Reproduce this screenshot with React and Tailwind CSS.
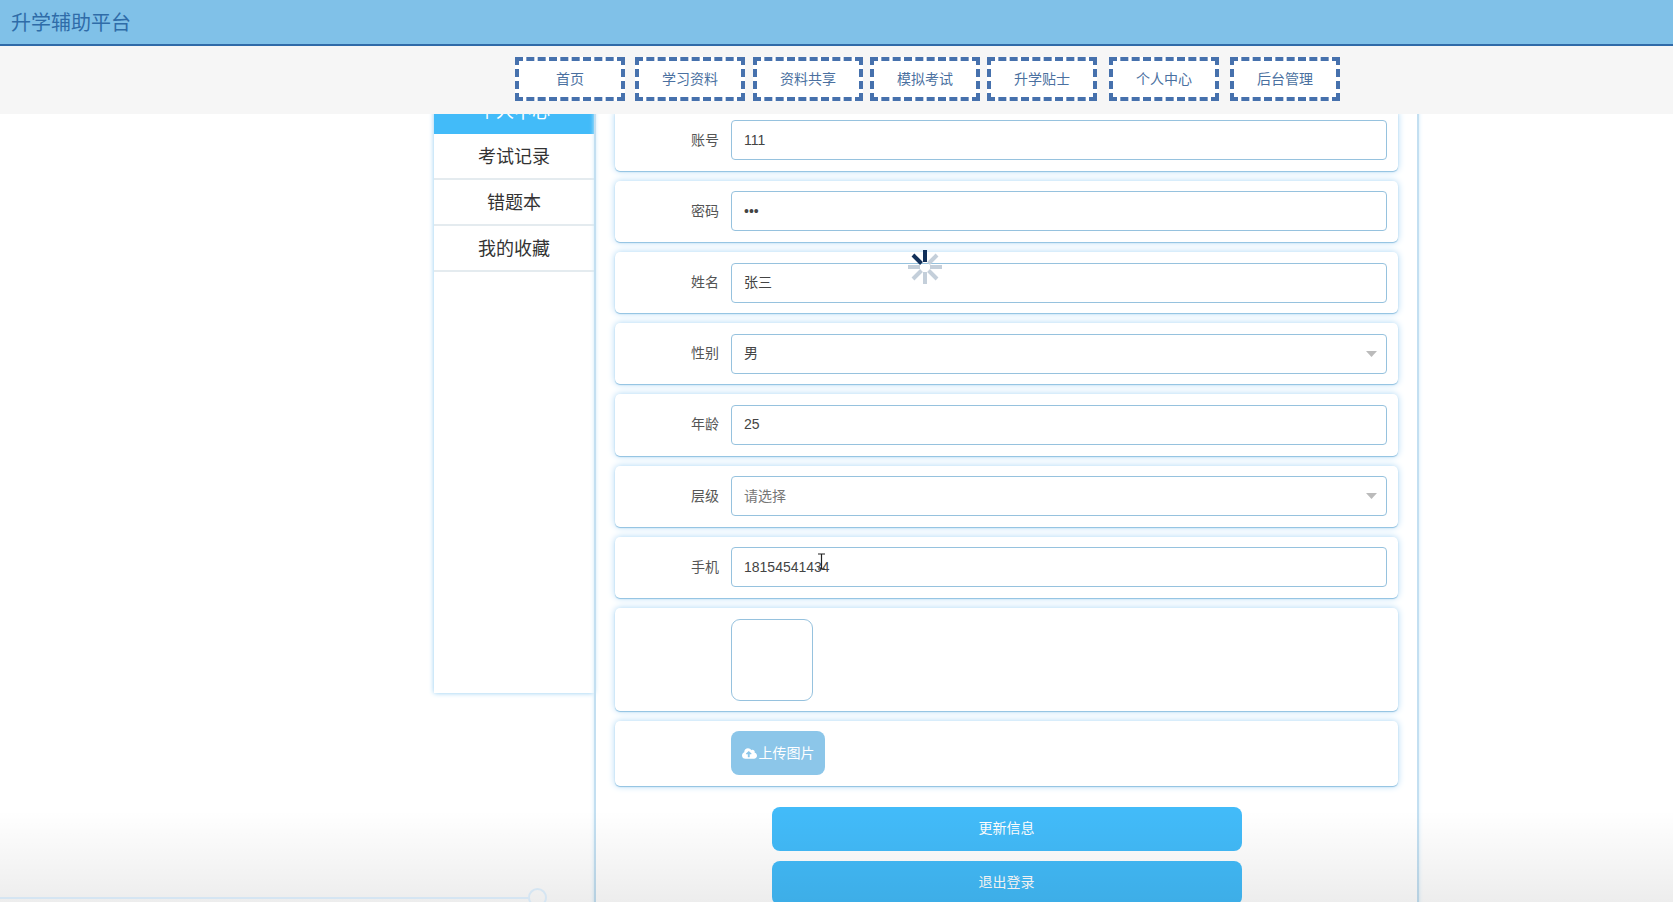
import React from "react";
import { FaCloudUploadAlt } from "react-icons/fa";

const font = { fontFamily: '"Liberation Sans", "Noto Sans CJK SC", sans-serif' };

const navItems = [
  ["首页", "ml-[515px]"],
  ["学习资料", "ml-[10px]"],
  ["资料共享", "ml-[8px]"],
  ["模拟考试", "ml-[7px]"],
  ["升学贴士", "ml-[7px]"],
  ["个人中心", "ml-[12px]"],
  ["后台管理", "ml-[11px]"],
];

const fields = [
  { label: "账号", value: "111" },
  { label: "密码", value: "•••", small: true },
  { label: "姓名", value: "张三" },
  { label: "性别", value: "男", select: true },
  { label: "年龄", value: "25" },
  { label: "层级", value: "请选择", select: true, muted: true },
  { label: "手机", value: "18154541434" },
];

const rowClass =
  "w-[783px] rounded-[5px] bg-white shadow-[0_1px_1px_#8fc0e0,0_0_7px_#a9d6f5] flex";

function Row({ f }) {
  return (
    <div className={rowClass + " h-[61.2px] items-center"}>
      <div className="w-[104px] text-right text-[14px] text-[#555]">{f.label}</div>
      <div className="ml-[12px] w-[656px] h-[40px] rounded-[4px] border border-[#96c2de] bg-white flex items-center justify-between pl-[12px] pr-[9px] text-[14px]">
        <span className={f.muted ? "text-[#777]" : "text-[#444]"}>{f.value}</span>
        {f.select && (
          <svg width="11" height="6" viewBox="0 0 11 6">
            <path d="M0 0H11L5.5 6Z" fill="#bbbbbb" />
          </svg>
        )}
      </div>
    </div>
  );
}

function Spinner() {
  const spokes = [0, 45, 90, 135, 180, 225, 270, 315];
  return (
    <svg
      width="36"
      height="36"
      viewBox="-18 -18 36 36"
      className="absolute left-[907px] top-[249px] pointer-events-none"
    >
      {spokes.map((a) => (
        <line
          key={a}
          x1="0"
          y1="-5"
          x2="0"
          y2="-17"
          stroke={a === 0 || a === 315 ? "#12305a" : "#c4cfda"}
          strokeWidth="4"
          transform={`rotate(${a})`}
        />
      ))}
    </svg>
  );
}

function IBeam() {
  return (
    <svg
      width="9"
      height="17"
      viewBox="0 0 9 17"
      className="absolute left-[817px] top-[553px] pointer-events-none"
    >
      <path d="M1 1H8M4.5 1V16M1 16H8" stroke="#222" strokeWidth="1.2" fill="none" />
    </svg>
  );
}

export default function App() {
  return (
    <div className="relative w-[1673px] h-[902px] overflow-hidden bg-white" style={font}>
      <header className="h-[46px] bg-[#80c1e8] border-b-2 border-[#2f6aa8] flex items-center pl-[11px] pt-[1px]">
        <span className="text-[20px] text-[#2f6ca8]">升学辅助平台</span>
      </header>

      <nav className="relative z-10 h-[68px] bg-[#f6f6f6] flex items-start pt-[11px]">
        {navItems.map(([t, m]) => (
          <div
            key={t}
            className={
              m +
              " w-[110px] h-[44px] border-4 border-dashed border-[#4671ad] bg-white flex items-center justify-center text-[14px] text-[#4a70a0]"
            }
          >
            {t}
          </div>
        ))}
      </nav>

      <main className="h-[788px] overflow-hidden">
        <div className="flex items-start ml-[434px] -mt-[25px]">
          <aside className="w-[160px] h-[604px] bg-white shadow-[0_0_5px_#8fcbf2]">
            <div className="h-[45px] bg-[#42bbf9] text-white text-[18px] flex items-center justify-center pt-[1px]">
              个人中心
            </div>
            {["考试记录", "错题本", "我的收藏"].map((t) => (
              <div
                key={t}
                className="h-[46px] border-b-2 border-[#e4ebef] flex items-center justify-center text-[18px] text-[#333] pt-[2px]"
              >
                {t}
              </div>
            ))}
          </aside>

          <section className="relative w-[825px] h-[900px] border-x-2 border-[#c3dff1] shadow-[0_0_4px_#cfe8f8] pl-[19px] pt-[20.6px]">
            <div className="flex flex-col gap-[10px]">
              {fields.map((f) => (
                <Row key={f.label} f={f} />
              ))}
              <div className={rowClass + " h-[103px] pt-[11px] pl-[116px]"}>
                <div className="w-[82px] h-[82px] rounded-[9px] border border-[#96c2de] bg-white" />
              </div>
              <div className={rowClass + " h-[65px] items-center pl-[116px]"}>
                <button className="w-[94px] h-[44px] rounded-[8px] bg-[#8cc6e9] text-white text-[14px] flex items-center justify-center gap-[2px]">
                  <FaCloudUploadAlt className="text-[15px]" />
                  上传图片
                </button>
              </div>
            </div>
            <div className="ml-[156.6px] mt-[21px] w-[470px] flex flex-col gap-[10px]">
              <button className="h-[44px] rounded-[8px] bg-[#42bbf9] text-white text-[14px]">更新信息</button>
              <button className="h-[44px] rounded-[8px] bg-[#42bbf9] text-white text-[14px]">退出登录</button>
            </div>
          </section>
        </div>
      </main>

      <Spinner />
      <IBeam />

      <div className="absolute left-0 right-0 bottom-0 h-[92px] bg-gradient-to-b from-[#00000000] to-[#00000012] pointer-events-none" />
      <div className="absolute left-0 top-[897px] w-[528px] h-[2px] bg-[#d5e5f2]" />
      <div className="absolute left-[528px] top-[888px] w-[19px] h-[19px] rounded-full border-2 border-[#d5e5f2]" />
    </div>
  );
}
